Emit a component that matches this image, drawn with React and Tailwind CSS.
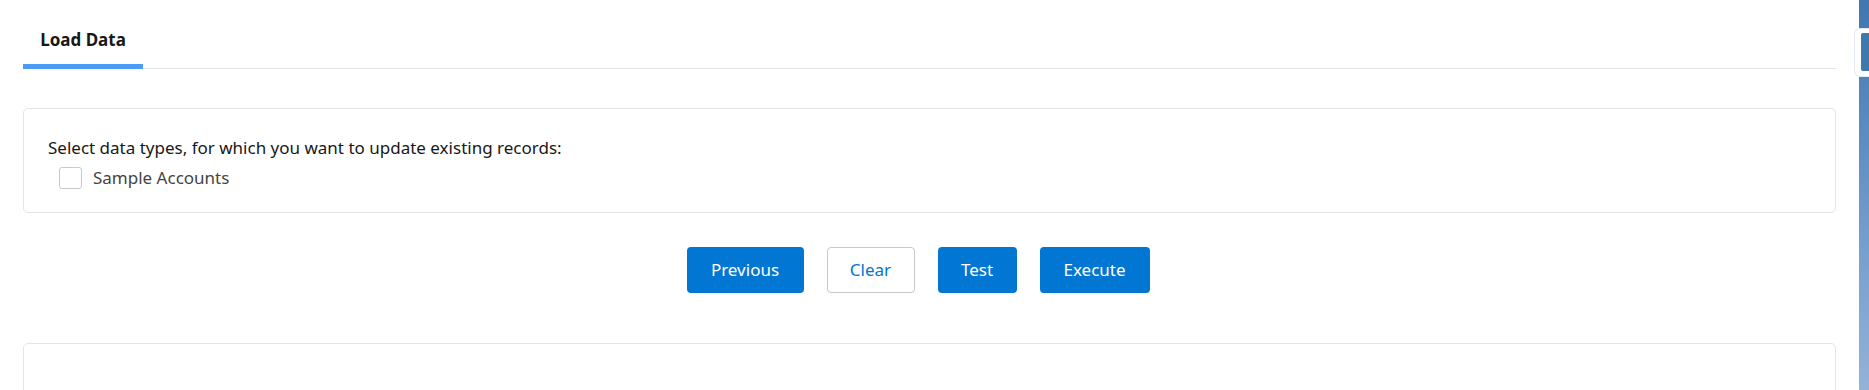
import React from "react";

const font = { fontFamily: '"Noto Sans", "Open Sans", sans-serif' };

export default function App() {
  return (
    <div className="relative flex min-h-screen overflow-hidden bg-white" style={font}>
      {/* main page */}
      <div className="flex-1 px-[23px]">
        {/* Tabs */}
        <div className="flex h-[69px] items-end border-b border-[#e5e5e5]">
          <button className="-mb-px w-[120px] border-b-[5px] border-[#4a9cf6] pb-[12px] text-center text-[17px] font-bold text-[#181818]">
            Load Data
          </button>
        </div>

        {/* Options card */}
        <div className="mt-[39px] h-[105px] rounded-[5px] border border-[#e5e5e5] px-6 pt-[27px]">
          <p className="text-[17px] leading-[23px] text-[#181818]">
            Select data types, for which you want to update existing records:
          </p>
          <label className="mt-[7px] flex items-center gap-[11px] pl-[11px]">
            <span className="h-[22px] w-[23px] rounded-[3px] border border-[#c9c9c9] bg-white" />
            <span className="text-[17px] leading-[23px] text-[#444444]">Sample Accounts</span>
          </label>
        </div>

        {/* Buttons */}
        <div className="mt-[34px] flex justify-center gap-[23px] pr-[23px]">
          <button className="h-[46px] w-[117px] rounded-[4px] bg-[#0176d3] text-[17px] text-white">Previous</button>
          <button className="h-[46px] w-[88px] rounded-[4px] border border-[#c9c9c9] bg-white text-[17px] text-[#0176d3]">Clear</button>
          <button className="h-[46px] w-[79px] rounded-[4px] bg-[#0176d3] text-[17px] text-white">Test</button>
          <button className="h-[46px] w-[110px] rounded-[4px] bg-[#0176d3] text-[17px] text-white">Execute</button>
        </div>

        {/* Results card */}
        <div className="mt-[50px] h-[200px] rounded-[5px] border border-[#e5e5e5]" />
      </div>

      {/* desktop edge */}
      <div className="w-[10px] bg-gradient-to-b from-[#3f77b0] via-[#7aa3d0] to-[#b3c6e2]" />
      <div className="absolute right-0 top-[28px] h-[49px] w-[15px] rounded-l-[6px] border border-r-0 border-[#e3e9f0] bg-white pl-[6px] pt-[4px]">
        <div className="h-[38px] w-full rounded-l-[2px] bg-[#3d79ad]" />
      </div>
    </div>
  );
}
